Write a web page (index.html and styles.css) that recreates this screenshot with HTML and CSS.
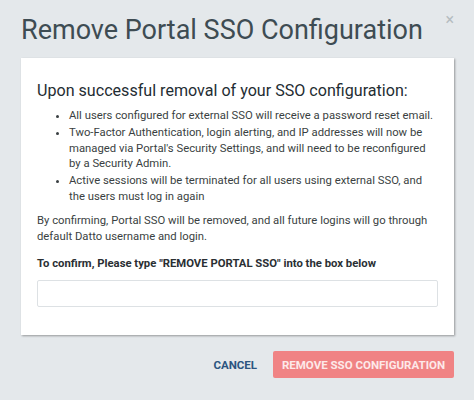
FILE: index.html
```html
<!DOCTYPE html>
<html>
<head>
<meta charset="utf-8">
<link rel="stylesheet" href="styles.css">
</head>
<body>
<div class="modal">
  <div class="header">
    <h1 class="title">Remove Portal SSO Configuration</h1>
    <span class="close">&times;</span>
  </div>
  <div class="card">
    <h2 class="subtitle">Upon successful removal of your SSO configuration:</h2>
    <ul class="list">
      <li>All users configured for external SSO will receive a password reset email.</li>
      <li>Two-Factor Authentication, login alerting, and IP addresses will now be managed via Portal's Security Settings, and will need to be reconfigured by a Security Admin.</li>
      <li>Active sessions will be terminated for all users using external SSO, and the users must log in again</li>
    </ul>
    <p class="para">By confirming, Portal SSO will be removed, and all future logins will go through default Datto username and login.</p>
    <p class="confirm">To confirm, Please type "REMOVE PORTAL SSO" into the box below</p>
    <input class="field" type="text">
  </div>
  <div class="footer">
    <button class="btn-cancel">CANCEL</button>
    <button class="btn-remove">REMOVE SSO CONFIGURATION</button>
  </div>
</div>
</body>
</html>
```
FILE: styles.css
```css
html, body {
  margin: 0;
  padding: 0;
  background: #e4e8eb;
  font-family: Roboto, "Liberation Sans", sans-serif;
}
.modal {
  width: 474px;
  height: 400px;
  box-sizing: border-box;
  padding: 0 20px 0 21px;
  background: #e4e8eb;
}
.header {
  display: flex;
  justify-content: space-between;
  align-items: flex-start;
  height: 58px;
}
.title {
  margin: 10px 0 0 0;
  font-size: 27px;
  font-weight: 400;
  line-height: 40px;
  color: #3e4c53;
}
.close {
  margin: 10px 0 0 0;
  font-size: 16px;
  line-height: 20px;
  color: #b5bcc0;
}
.card {
  background: #fff;
  box-shadow: 1px 1px 2px rgba(0,0,0,0.35);
  padding: 21px 16px 28px 16px;
  height: 277px;
  box-sizing: border-box;
}
.subtitle {
  margin: 0;
  font-size: 16.1px;
  font-weight: 400;
  line-height: 24px;
  color: #1f2d33;
}
.list {
  margin: 5px 0 0 0;
  padding-left: 32px;
  font-size: 11.3px;
  line-height: 15.5px;
  color: #3a3f42;
}
.list li {
  margin-bottom: 1.5px;
}
.para {
  margin: 9px 0 0 0;
  font-size: 11.3px;
  line-height: 16px;
  color: #3a3f42;
}
.confirm {
  margin: 11px 0 0 0;
  font-size: 11.3px;
  font-weight: 700;
  line-height: 16px;
  color: #2a2f33;
}
.field {
  display: block;
  width: 100%;
  box-sizing: border-box;
  height: 27px;
  margin-top: 8px;
  border: 1px solid #dde1e4;
  border-radius: 2px;
  outline: none;
}
.footer {
  display: flex;
  justify-content: flex-end;
  align-items: center;
  gap: 16px;
  margin-top: 16px;
}
.btn-cancel {
  background: none;
  border: none;
  font-family: Roboto, "Liberation Sans", sans-serif;
  font-weight: 700;
  font-size: 11.5px;
  color: #2c5580;
  padding: 0 0;
}
.btn-remove {
  background: #f08384;
  border: none;
  border-radius: 2px;
  color: #fde9e9;
  font-family: Roboto, "Liberation Sans", sans-serif;
  font-weight: 700;
  font-size: 11.5px;
  height: 27px;
  width: 181px;
  padding: 0;
}
```
